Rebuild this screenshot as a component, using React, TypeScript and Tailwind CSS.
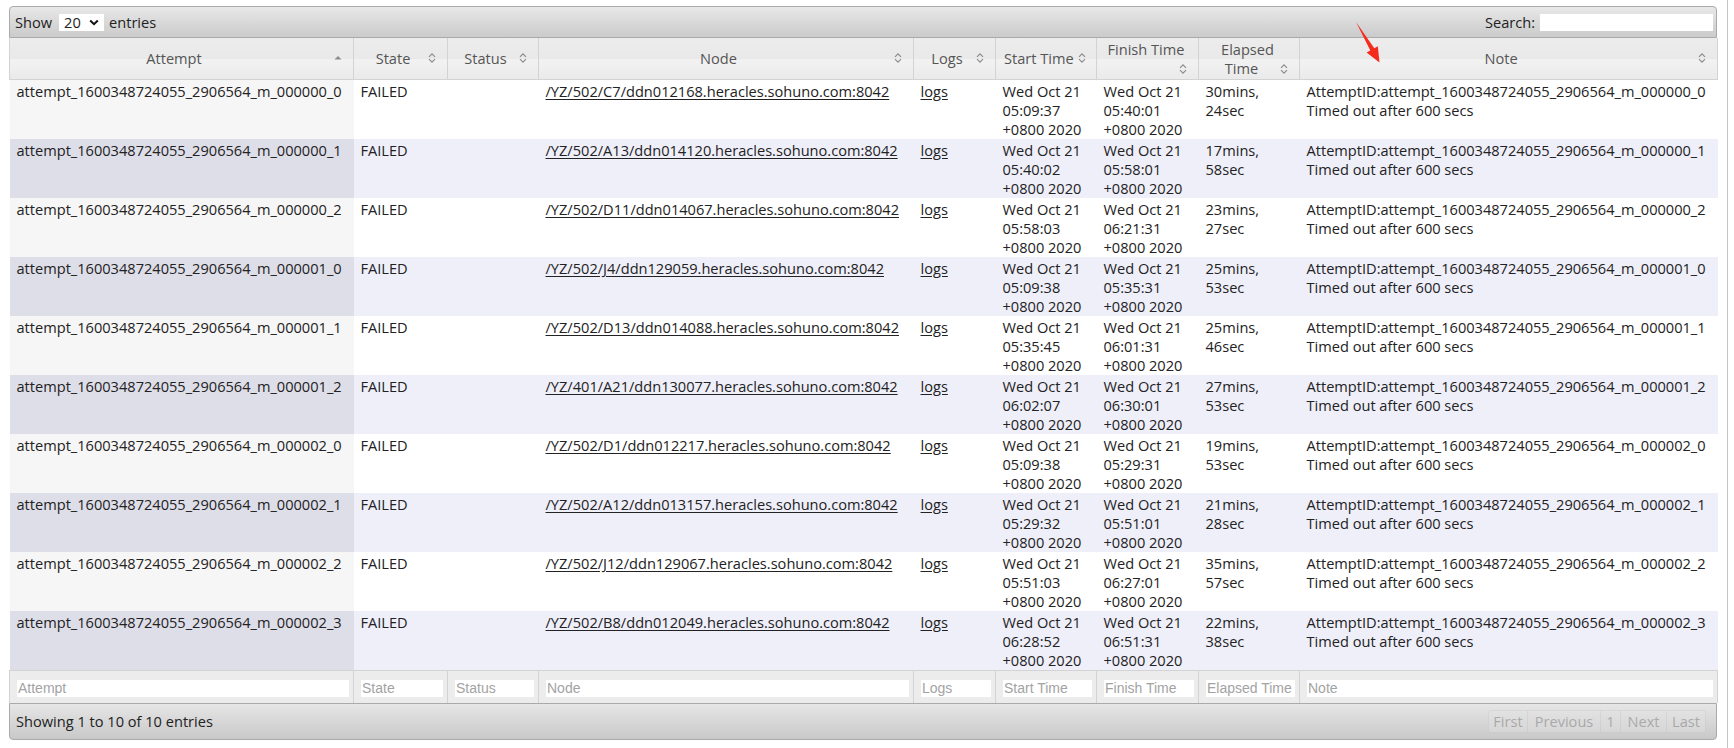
import React from "react";

const rows: [string, string, string, string, string, string][] = [
  ["000000_0", "/YZ/502/C7/ddn012168.heracles.sohuno.com:8042", "05:09:37", "05:40:01", "30mins,", "24sec"],
  ["000000_1", "/YZ/502/A13/ddn014120.heracles.sohuno.com:8042", "05:40:02", "05:58:01", "17mins,", "58sec"],
  ["000000_2", "/YZ/502/D11/ddn014067.heracles.sohuno.com:8042", "05:58:03", "06:21:31", "23mins,", "27sec"],
  ["000001_0", "/YZ/502/J4/ddn129059.heracles.sohuno.com:8042", "05:09:38", "05:35:31", "25mins,", "53sec"],
  ["000001_1", "/YZ/502/D13/ddn014088.heracles.sohuno.com:8042", "05:35:45", "06:01:31", "25mins,", "46sec"],
  ["000001_2", "/YZ/401/A21/ddn130077.heracles.sohuno.com:8042", "06:02:07", "06:30:01", "27mins,", "53sec"],
  ["000002_0", "/YZ/502/D1/ddn012217.heracles.sohuno.com:8042", "05:09:38", "05:29:31", "19mins,", "53sec"],
  ["000002_1", "/YZ/502/A12/ddn013157.heracles.sohuno.com:8042", "05:29:32", "05:51:01", "21mins,", "28sec"],
  ["000002_2", "/YZ/502/J12/ddn129067.heracles.sohuno.com:8042", "05:51:03", "06:27:01", "35mins,", "57sec"],
  ["000002_3", "/YZ/502/B8/ddn012049.heracles.sohuno.com:8042", "06:28:52", "06:51:31", "22mins,", "38sec"],
];

const colWidths = [
  "w-[344px]",
  "w-[94px]",
  "w-[91px]",
  "w-[375px]",
  "w-[82px]",
  "w-[101px]",
  "w-[102px]",
  "w-[101px]",
  "w-[418px]",
];

const filterLabels = ["Attempt", "State", "Status", "Node", "Logs", "Start Time", "Finish Time", "Elapsed Time", "Note"];

function SortBoth() {
  return (
    <svg width="8" height="12" viewBox="0 0 8 12" className="shrink-0">
      <path d="M1 4.8L4 1.8L7 4.8M1 7.2L4 10.2L7 7.2" fill="none" stroke="#8c8c8c" strokeWidth="1.2" />
    </svg>
  );
}

function SortAsc() {
  return (
    <svg width="8" height="12" viewBox="0 0 8 12" className="shrink-0">
      <path d="M0.5 7.5L4 4L7.5 7.5Z" fill="#8c8c8c" />
    </svg>
  );
}

const thBase =
  "h-[41px] border border-t-0 border-[#d3d3d3] pl-[8px] pr-[11px] font-normal text-[#555555] align-middle bg-[linear-gradient(to_bottom,#ececec_0%,#e9e9e9_50%,#f2f2f2_53%,#eaeaea_100%)]";

function HeadCell({ label, asc }: { label: string; asc?: boolean }) {
  return (
    <th className={thBase}>
      <div className="flex items-center gap-[4px]">
        <span className="flex-1 text-center whitespace-nowrap">{label}</span>
        {asc ? <SortAsc /> : <SortBoth />}
      </div>
    </th>
  );
}

function Chevron() {
  return (
    <svg width="10" height="7" viewBox="0 0 10 7">
      <path d="M1.2 1.5L5 5.2L8.8 1.5" fill="none" stroke="#111" strokeWidth="2" />
    </svg>
  );
}

export default function App() {
  return (
    <div className="relative w-[1734px] h-[748px] bg-white flex overflow-hidden font-['Open_Sans','Noto_Sans',sans-serif] text-[14.6px] leading-[19px] text-[#222222]">
      <div className="w-[1727px] pl-[9px] pt-[6px]">
        <div className="w-[1708px]">
          {/* top toolbar */}
          <div className="h-[32px] border border-[#aaaaaa] rounded-t-[4px] bg-[linear-gradient(to_bottom,#e8e8e8_0%,#d9d9d9_50%,#cbcbcb_100%)] flex items-center justify-between pl-[5px] pr-[3px]">
            <div className="flex items-center">
              <span>Show</span>
              <div className="ml-[7px] mr-[5px] w-[45px] h-[17px] bg-white flex items-center justify-between pl-[5px] pr-[5px]">
                <span>20</span>
                <Chevron />
              </div>
              <span>entries</span>
            </div>
            <div className="flex items-center">
              <span>Search:</span>
              <div className="ml-[5px] w-[173px] h-[17px] bg-white" />
            </div>
          </div>

          <table className="table-fixed border-collapse w-[1708px]">
            <colgroup>
              {colWidths.map((w, i) => (
                <col key={i} className={w} />
              ))}
            </colgroup>
            <thead>
              <tr>
                <HeadCell label="Attempt" asc />
                <HeadCell label="State" />
                <HeadCell label="Status" />
                <HeadCell label="Node" />
                <HeadCell label="Logs" />
                <HeadCell label="Start Time" />
                <th className={thBase + " align-top pt-[2px]"}>
                  <div className="text-center whitespace-nowrap">Finish Time</div>
                  <div className="h-[19px] flex items-center justify-end">
                    <SortBoth />
                  </div>
                </th>
                <th className={thBase + " align-top pt-[2px]"}>
                  <div className="text-center">Elapsed</div>
                  <div className="flex items-center gap-[4px]">
                    <span className="flex-1 text-center">Time</span>
                    <SortBoth />
                  </div>
                </th>
                <HeadCell label="Note" />
              </tr>
            </thead>
            <tbody>
              {rows.map((r, i) => {
                const even = i % 2 === 1;
                const sortBg = even ? "bg-[#dedee9]" : "bg-[#f6f6f6]";
                const rowBg = even ? "bg-[#efeffa]" : "bg-white";
                const td = "h-[59px] align-top px-[7px] pt-[2px] pb-0 " + rowBg;
                return (
                  <tr key={i}>
                    <td className={"h-[59px] align-top px-[7px] pt-[2px] pb-0 whitespace-nowrap " + sortBg}>
                      attempt_1600348724055_2906564_m_{r[0]}
                    </td>
                    <td className={td}>FAILED</td>
                    <td className={td}></td>
                    <td className={td + " whitespace-nowrap"}>
                      <a href="#" className="underline underline-offset-2">
                        {r[1]}
                      </a>
                    </td>
                    <td className={td}>
                      <a href="#" className="underline underline-offset-2">
                        logs
                      </a>
                    </td>
                    <td className={td + " whitespace-nowrap"}>
                      Wed Oct 21
                      <br />
                      {r[2]}
                      <br />
                      +0800 2020
                    </td>
                    <td className={td + " whitespace-nowrap"}>
                      Wed Oct 21
                      <br />
                      {r[3]}
                      <br />
                      +0800 2020
                    </td>
                    <td className={td + " whitespace-nowrap"}>
                      {r[4]}
                      <br />
                      {r[5]}
                    </td>
                    <td className={td + " whitespace-nowrap"}>
                      AttemptID:attempt_1600348724055_2906564_m_{r[0]}
                      <br />
                      Timed out after 600 secs
                    </td>
                  </tr>
                );
              })}
            </tbody>
            <tfoot>
              <tr>
                {filterLabels.map((l, i) => (
                  <th
                    key={i}
                    className="h-[33px] border border-b-0 border-[#d3d3d3] bg-[#ececec] align-top pt-[9px] pl-[7px] pr-[4px] font-normal"
                  >
                    <input
                      placeholder={l}
                      readOnly
                      className="block w-full h-[17px] bg-white border-0 outline-none px-[1px] text-[14px] leading-[17px] font-['Liberation_Sans',Arial,sans-serif] placeholder:text-[#a3a3a3]"
                    />
                  </th>
                ))}
              </tr>
            </tfoot>
          </table>

          {/* bottom toolbar */}
          <div className="h-[37px] border border-[#aaaaaa] rounded-b-[4px] bg-[linear-gradient(to_bottom,#e6e6e6_0%,#d7d7d7_50%,#c9c9c9_100%)] flex items-center justify-between pl-[6px] pr-[10px]">
            <span>Showing 1 to 10 of 10 entries</span>
            <div className="flex items-center opacity-35 text-[#555555]">
              <span className="w-[40px] h-[23px] border border-[#c8c8c8] rounded-l-[3px] bg-[#e6e6e6] flex items-center justify-center">First</span>
              <span className="w-[73px] h-[23px] border border-l-0 border-[#c8c8c8] bg-[#e6e6e6] flex items-center justify-center">Previous</span>
              <span className="w-[20px] h-[23px] border border-l-0 border-[#c8c8c8] bg-[#e6e6e6] flex items-center justify-center">1</span>
              <span className="w-[46px] h-[23px] border border-l-0 border-[#c8c8c8] bg-[#e6e6e6] flex items-center justify-center">Next</span>
              <span className="w-[39px] h-[23px] border border-l-0 border-[#c8c8c8] rounded-r-[3px] bg-[#e6e6e6] flex items-center justify-center">Last</span>
            </div>
          </div>
        </div>
      </div>
      <div className="w-px h-full bg-[#c4c4c4]" />

      {/* red annotation arrow */}
      <svg className="absolute left-0 top-0 pointer-events-none" width="1734" height="748" viewBox="0 0 1734 748">
        <polygon
          points="1356,22 1374.3,48.2 1377.8,46.2 1379.5,62.5 1366.6,52.6 1370.3,50.5"
          fill="#f52b1c"
        />
      </svg>
    </div>
  );
}
